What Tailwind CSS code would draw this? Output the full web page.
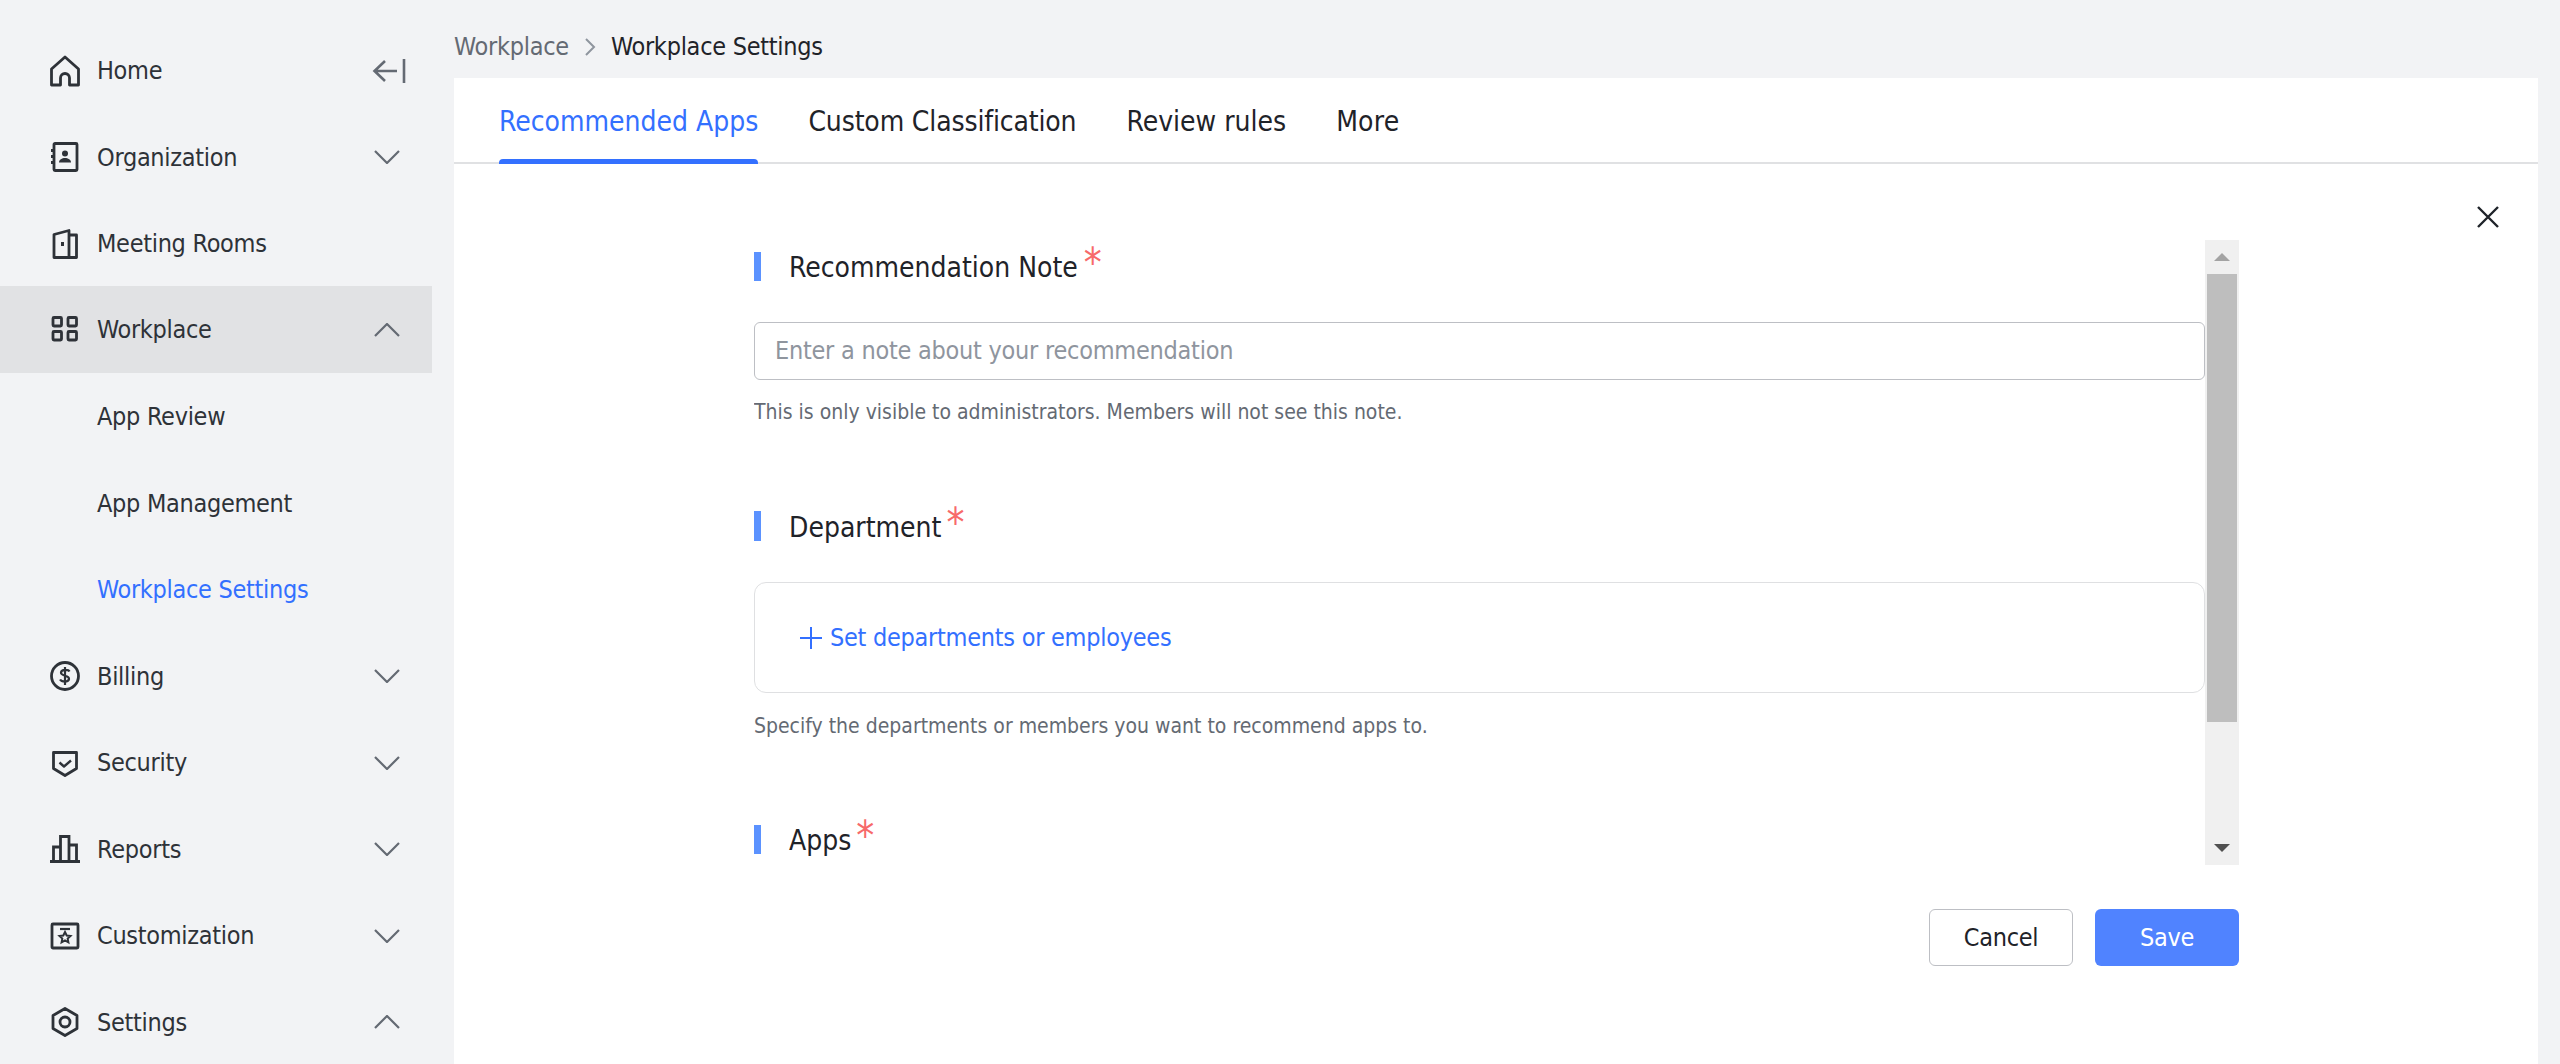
<!DOCTYPE html>
<html lang="en">
<head>
<meta charset="utf-8">
<title>Workplace Settings</title>
<script src="https://cdn.jsdelivr.net/npm/@tailwindcss/browser@4"></script>
</head>
<body class="m-0 h-[1064px] w-[2560px] overflow-hidden bg-[#f2f3f5] font-['DejaVu_Sans','Noto_Sans',sans-serif] [font-stretch:condensed]">
<div class="flex h-full">
  <!-- Sidebar -->
  <aside class="h-full w-[454px] shrink-0 pt-[26px] text-[25px] tracking-[-0.3px] text-[#2e3238]">
    <div class="w-[432px]">
      <div class="flex h-[86.5px] items-center pl-[49px] pt-[3px]">
        <svg class="mr-[16px] h-[32px] w-[32px]" viewBox="0 0 32 32" fill="none" stroke="#2e3238" stroke-width="2.800" stroke-linejoin="round"><path d="M2.500 14 16 2l13.500 12v16H20.500v-7a4.500 4.500 0 0 0-9 0v7H2.500z"/></svg>
        <span>Home</span>
        <svg class="ml-auto mr-[26px] h-[26px] w-[34px]" viewBox="0 0 34 26" fill="none" stroke="#646a73" stroke-width="2.600"><path d="M13 3 2.500 13 13 23M3 13h22M32 1v24"/></svg>
      </div>
      <div class="flex h-[86.5px] items-center pl-[49px] pt-[3px]">
        <svg class="mr-[16px] h-[32px] w-[32px]" viewBox="0 0 32 32" fill="none" stroke="#2e3238" stroke-width="2.800"><rect x="5" y="2.500" width="23" height="27" rx="1"/><circle cx="16" cy="12.500" r="3" fill="#2e3238" stroke="none"/><path d="M10 21.500c0-6 12-6 12 0z" fill="#2e3238" stroke="none"/><path d="M2 9.500h4M2 15.500h4M2 21.500h4"/></svg>
        <span>Organization</span>
        <svg class="ml-auto mr-[32px] h-[14px] w-[26px]" viewBox="0 0 26 14" fill="none" stroke="#646a73" stroke-width="2.200"><path d="M1 1l12 12L25 1"/></svg>
      </div>
      <div class="flex h-[86.5px] items-center pl-[49px] pt-[3px]">
        <svg class="mr-[16px] h-[32px] w-[32px]" viewBox="0 0 32 32" fill="none" stroke="#2e3238" stroke-width="2.800" stroke-linejoin="round"><path d="M5 6.500 20 2.500v27H5zM20 7h7.500v22.500H20"/><path d="M13.500 14v4" stroke-width="3"/></svg>
        <span>Meeting Rooms</span>
      </div>
      <div class="flex h-[87px] items-center bg-[#e1e2e4] pl-[49px] pt-[2px]">
        <svg class="mr-[16px] h-[32px] w-[32px]" viewBox="0 0 32 32" fill="none" stroke="#2e3238" stroke-width="2.800"><rect x="4" y="3.500" width="8.500" height="8.500" rx="1"/><rect x="19" y="3.500" width="8.500" height="8.500" rx="1"/><rect x="4" y="17.500" width="8.500" height="8.500" rx="1"/><rect x="19" y="17.500" width="8.500" height="8.500" rx="1"/></svg>
        <span>Workplace</span>
        <svg class="ml-auto mr-[32px] h-[14px] w-[26px]" viewBox="0 0 26 14" fill="none" stroke="#646a73" stroke-width="2.200"><path d="M1 13 13 1l12 12"/></svg>
      </div>
      <div class="flex h-[86.5px] items-center pl-[97px] pt-[2px]">App Review</div>
      <div class="flex h-[86.5px] items-center pl-[97px] pt-[2px]">App Management</div>
      <div class="flex h-[86.5px] items-center pl-[97px] pt-[2px] text-[#3370ff]">Workplace Settings</div>
      <div class="flex h-[86.5px] items-center pl-[49px] pt-[2px]">
        <svg class="mr-[16px] h-[32px] w-[32px]" viewBox="0 0 32 32" fill="none" stroke="#2e3238" stroke-width="2.800"><circle cx="16" cy="16" r="13.500"/><path d="M20.500 11.500c-1-2-8-2.500-8.500 1-.5 4 8.500 2.500 8 6.500-.5 3.500-7.500 3-9 .5M16 7v18" stroke-width="2.200"/></svg>
        <span>Billing</span>
        <svg class="ml-auto mr-[32px] h-[14px] w-[26px]" viewBox="0 0 26 14" fill="none" stroke="#646a73" stroke-width="2.200"><path d="M1 1l12 12L25 1"/></svg>
      </div>
      <div class="flex h-[86.5px] items-center pl-[49px] pt-[2px]">
        <svg class="mr-[16px] h-[32px] w-[32px]" viewBox="0 0 32 32" fill="none" stroke="#2e3238" stroke-width="2.800" stroke-linejoin="round"><path d="M4.500 5.500 16 5.500l11.500 0v16L16 28.500 4.500 21.500z"/><path d="m10.500 15.500 4.500 4 7-6" stroke-width="2.400"/></svg>
        <span>Security</span>
        <svg class="ml-auto mr-[32px] h-[14px] w-[26px]" viewBox="0 0 26 14" fill="none" stroke="#646a73" stroke-width="2.200"><path d="M1 1l12 12L25 1"/></svg>
      </div>
      <div class="flex h-[86.5px] items-center pl-[49px] pt-[2px]">
        <svg class="mr-[16px] h-[32px] w-[32px]" viewBox="0 0 32 32" fill="none" stroke="#2e3238" stroke-width="2.800"><path d="M1 28.500h30M4.500 28.500V14h7v14.500M11.500 28.500V3.500h8.500v25M20 28.500V12h7.500v16.500"/></svg>
        <span>Reports</span>
        <svg class="ml-auto mr-[32px] h-[14px] w-[26px]" viewBox="0 0 26 14" fill="none" stroke="#646a73" stroke-width="2.200"><path d="M1 1l12 12L25 1"/></svg>
      </div>
      <div class="flex h-[86.5px] items-center pl-[49px] pt-[2px]">
        <svg class="mr-[16px] h-[32px] w-[32px]" viewBox="0 0 32 32" fill="none" stroke="#2e3238" stroke-width="2.800"><rect x="3" y="4" width="26" height="24" rx="1"/><path d="M11 9h10" stroke-width="2.200"/><path d="m16 12 1.700 3.500 3.800.5-2.800 2.600.7 3.800-3.400-1.900-3.400 1.900.7-3.800-2.800-2.600 3.800-.5z" stroke-width="2"/></svg>
        <span>Customization</span>
        <svg class="ml-auto mr-[32px] h-[14px] w-[26px]" viewBox="0 0 26 14" fill="none" stroke="#646a73" stroke-width="2.200"><path d="M1 1l12 12L25 1"/></svg>
      </div>
      <div class="flex h-[86.5px] items-center pl-[49px] pt-[2px]">
        <svg class="mr-[16px] h-[32px] w-[32px]" viewBox="0 0 32 32" fill="none" stroke="#2e3238" stroke-width="2.800" stroke-linejoin="round"><path d="M16 2.500 28 9.500v13l-12 7-12-7v-13z"/><circle cx="16" cy="16" r="5"/></svg>
        <span>Settings</span>
        <svg class="ml-auto mr-[32px] h-[14px] w-[26px]" viewBox="0 0 26 14" fill="none" stroke="#646a73" stroke-width="2.200"><path d="M1 13 13 1l12 12"/></svg>
      </div>
    </div>
  </aside>

  <!-- Main column -->
  <main class="flex h-full w-[2084px] shrink-0 flex-col">
    <nav class="flex h-[78px] shrink-0 items-center pt-[16px] text-[25px] tracking-[-0.27px]">
      <span class="text-[#646a73]">Workplace</span>
      <svg class="mx-[15px] h-[20px] w-[12px]" viewBox="0 0 12 20" fill="none" stroke="#8f959e" stroke-width="2"><path d="m2 2 8 8-8 8"/></svg>
      <span class="text-[#1f2329]">Workplace Settings</span>
    </nav>
    <section class="relative flex-1 bg-white">
      <div class="flex h-[86px] gap-[50px] pl-[45px] text-[28px] text-[#1f2329] shadow-[inset_0_-2px_0_#e0e1e3]">
        <div class="flex h-[86px] flex-col text-[#3370ff]"><span class="flex flex-1 items-center pt-[7px]">Recommended Apps</span><div class="h-[5px] rounded-t-[4px] bg-[#3370ff]"></div></div>
        <div class="flex h-[86px] items-center pt-[2px] tracking-[-0.15px]">Custom Classification</div>
        <div class="flex h-[86px] items-center pt-[2px]">Review rules</div>
        <div class="flex h-[86px] items-center pt-[2px] tracking-[0.2px]">More</div>
      </div>
      <svg class="absolute right-[39px] top-[128px] h-[22px] w-[22px]" viewBox="0 0 22 22" fill="none" stroke="#1f2329" stroke-width="2.400"><path d="m1 1 20 20M21 1 1 21"/></svg>

      <div class="ml-[300px] mt-[76px] flex h-[625px] w-[1485px]">
        <div class="h-full w-[1451px] overflow-hidden pt-[12px] text-[#1f2329]">
          <div class="flex h-[29px] items-center border-l-[7px] border-[#5b92ff] pl-[28px] pt-[3px] text-[28px]">Recommendation Note<span class="ml-[6px] -translate-y-[5px] text-[40px] leading-none text-[#f76a6a]">*</span></div>
          <div class="mt-[41px] flex h-[58px] items-center rounded-[6px] border border-[#bdbfc4] pl-[20px] text-[25px] tracking-[-0.25px] text-[#8f959e]">Enter a note about your recommendation</div>
          <p class="mt-[17px] text-[21px] leading-[30px] text-[#646a73]">This is only visible to administrators. Members will not see this note.</p>
          <div class="mt-[84px] flex h-[30px] items-center border-l-[7px] border-[#5b92ff] pl-[28px] pt-[3px] text-[28px]">Department<span class="ml-[5px] -translate-y-[5px] text-[40px] leading-none text-[#f76a6a]">*</span></div>
          <div class="mt-[41px] flex h-[111px] items-center rounded-[12px] border border-[#dfe0e2] pl-[45px] pt-[1px] text-[25px] tracking-[-0.27px] text-[#3370ff]">
            <svg class="mr-[8px] h-[22px] w-[22px]" viewBox="0 0 22 22" fill="none" stroke="#3370ff" stroke-width="2"><path d="M11 0v22M0 11h22"/></svg>
            <span>Set departments or employees</span>
          </div>
          <p class="mt-[18px] text-[21px] leading-[30px] text-[#646a73]">Specify the departments or members you want to recommend apps to.</p>
          <div class="mt-[84px] flex h-[29px] items-center border-l-[7px] border-[#5b92ff] pl-[28px] pt-[3px] text-[28px]">Apps<span class="ml-[5px] -translate-y-[5px] text-[40px] leading-none text-[#f76a6a]">*</span></div>
        </div>
        <!-- Scrollbar -->
        <div class="flex h-full w-[34px] shrink-0 flex-col items-center bg-[#f0f0f0]">
          <div class="flex h-[34px] w-full shrink-0 items-center justify-center"><div class="h-0 w-0 border-x-[8px] border-b-[8px] border-x-transparent border-b-[#a3a3a3]"></div></div>
          <div class="h-[448px] w-[30px] shrink-0 bg-[#bebebe]"></div>
          <div class="mt-auto flex h-[34px] w-full shrink-0 items-center justify-center"><div class="h-0 w-0 border-x-[8px] border-t-[8px] border-x-transparent border-t-[#505050]"></div></div>
        </div>
      </div>

      <div class="ml-[300px] mt-[44px] flex w-[1485px] justify-end gap-[22px] text-[25px] tracking-[-0.3px]">
        <button class="flex h-[57px] w-[144px] items-center justify-center rounded-[6px] border border-[#bdbfc4] bg-white text-[#1f2329]">Cancel</button>
        <button class="flex h-[57px] w-[144px] items-center justify-center rounded-[6px] bg-[#5083ff] text-white">Save</button>
      </div>
    </section>
  </main>
</div>
</body>
</html>
